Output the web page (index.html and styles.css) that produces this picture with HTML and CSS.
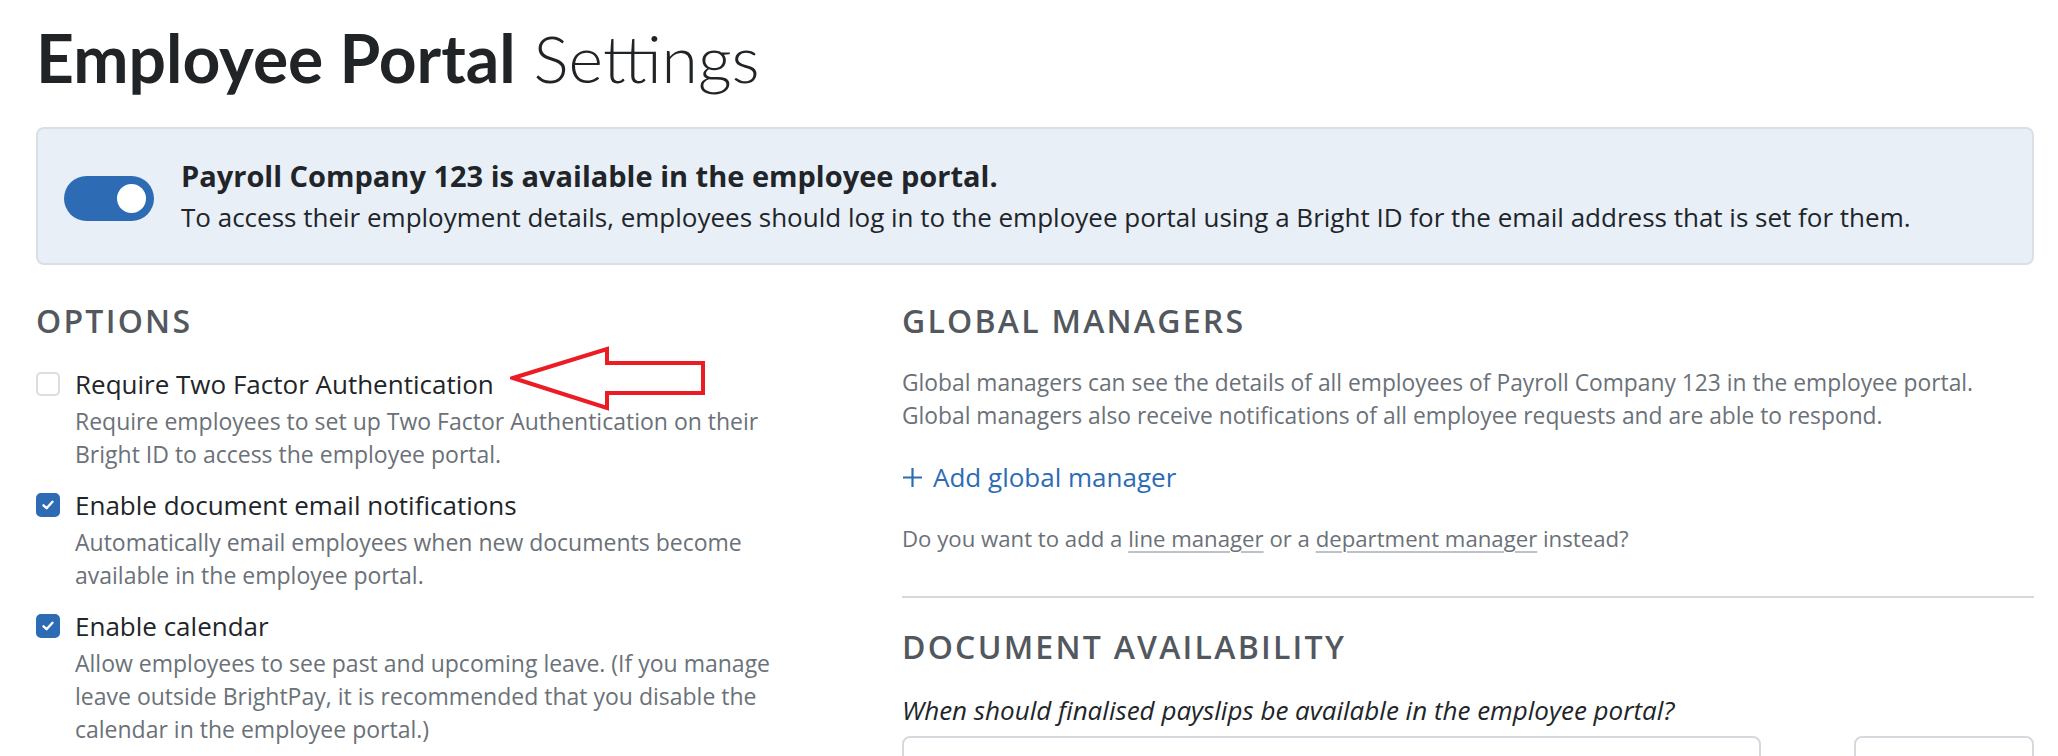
FILE: index.html
```html
<!DOCTYPE html>
<html lang="en">
<head>
    <meta charset="UTF-8">
    <meta name="viewport" content="width=device-width, initial-scale=1.0">
    <link rel="stylesheet" href="styles.css">
    <title>Employee Portal Settings</title>
</head>
<body>
    <div class="page">
        <h1 class="page-title"><strong>Employee Portal</strong> Settings</h1>

        <div class="portal-status">
            <span class="toggle"><span class="toggle-knob"></span></span>
            <div class="status-text">
                <p class="status-title">Payroll Company 123 is available in the employee portal.</p>
                <p class="status-desc">To access their employment details, employees should log in to the employee portal using a Bright ID for the email address that is set for them.</p>
            </div>
        </div>

        <div class="settings-grid">
            <section class="options">
                <h2 class="section-title">Options</h2>

                <div class="option">
                    <span class="checkbox"></span>
                    <div class="option-body">
                        <div class="option-label">Require Two Factor Authentication</div>
                        <div class="option-desc">Require employees to set up Two Factor Authentication on their Bright ID to access the employee portal.</div>
                    </div>
                    <svg class="annotation-arrow" width="198" height="66" viewBox="0 0 198 66">
                        <polygon points="3,32 97,3 97,17 193,17 193,47 97,47 97,62" fill="none" stroke="#ec1c24" stroke-width="4" stroke-linejoin="miter"/>
                    </svg>
                </div>

                <div class="option">
                    <span class="checkbox checked">
                        <svg width="14" height="14" viewBox="0 0 14 14"><path d="M2.5 7.3 L5.6 10.2 L11.5 3.8" fill="none" stroke="#fff" stroke-width="2.4" stroke-linecap="round" stroke-linejoin="round"/></svg>
                    </span>
                    <div class="option-body">
                        <div class="option-label">Enable document email notifications</div>
                        <div class="option-desc">Automatically email employees when new documents become available in the employee portal.</div>
                    </div>
                </div>

                <div class="option">
                    <span class="checkbox checked">
                        <svg width="14" height="14" viewBox="0 0 14 14"><path d="M2.5 7.3 L5.6 10.2 L11.5 3.8" fill="none" stroke="#fff" stroke-width="2.4" stroke-linecap="round" stroke-linejoin="round"/></svg>
                    </span>
                    <div class="option-body">
                        <div class="option-label">Enable calendar</div>
                        <div class="option-desc">Allow employees to see past and upcoming leave. (If you manage leave outside BrightPay, it is recommended that you disable the calendar in the employee portal.)</div>
                    </div>
                </div>
            </section>

            <section class="managers">
                <h2 class="section-title">Global Managers</h2>
                <p class="section-desc">Global managers can see the details of all employees of Payroll Company 123 in the employee portal.<br>Global managers also receive notifications of all employee requests and are able to respond.</p>
                <a class="add-link" href="#">
                    <svg width="21" height="21" viewBox="0 0 21 21"><path d="M10.5 1 V20 M1 10.5 H20" stroke="#2d6cb5" stroke-width="2.2"/></svg>
                    Add global manager
                </a>
                <p class="section-desc manager-hint">Do you want to add a <a class="soft-link" href="#">line manager</a> or a <a class="soft-link" href="#">department manager</a> instead?</p>

                <hr class="divider">

                <h2 class="section-title">Document Availability</h2>
                <p class="question">When should finalised payslips be available in the employee portal?</p>
                <div class="availability-row">
                    <div class="select-box wide">On the pay date</div>
                    <span class="row-word">from</span>
                    <div class="select-box narrow">09:00</div>
                </div>
            </section>
        </div>
    </div>
</body>
</html>
```

FILE: styles.css
```css
html, body {
    margin: 0;
    height: 100%;
    overflow: hidden;
    background-color: #fff;
}

body {
    font-family: "Open Sans", "Liberation Sans", sans-serif;
    color: #212529;
}

p {
    margin: 0;
}

.page {
    padding: 0 24px 0 36px;
}

.page-title {
    margin: 18px 0 30px 0;
    font-family: Lato, "Open Sans", sans-serif;
    font-size: 66px;
    line-height: 1.2;
    font-weight: 300;
    color: #212427;
}

.page-title strong {
    font-weight: 700;
}

/* status banner */
.portal-status {
    display: flex;
    align-items: center;
    gap: 27px;
    padding: 29px 26px 28px 26px;
    background-color: #e8eff7;
    border: 2px solid #d9dfe5;
    border-radius: 8px;
}

.toggle {
    flex: none;
    display: flex;
    align-items: center;
    justify-content: flex-end;
    box-sizing: border-box;
    width: 90px;
    height: 45px;
    padding: 0 8px;
    margin-top: 3px;
    background-color: #2d6cb5;
    border-radius: 23px;
}

.toggle-knob {
    width: 29px;
    height: 29px;
    border-radius: 50%;
    background-color: #fff;
}

.status-title {
    font-size: 29px;
    line-height: 36px;
    font-weight: 700;
    margin-bottom: 5px;
}

.status-desc {
    font-size: 26px;
    line-height: 36px;
}

/* columns */
.settings-grid {
    display: grid;
    grid-template-columns: 760px 1fr;
    column-gap: 106px;
    margin-top: 38px;
}

.section-title {
    margin: 0 0 27px 0;
    font-size: 32px;
    line-height: 36px;
    font-weight: 600;
    letter-spacing: 0.07em;
    text-transform: uppercase;
    color: #53585e;
}

.option {
    position: relative;
    display: flex;
    align-items: flex-start;
    gap: 15px;
    margin-bottom: 16px;
}

.checkbox {
    flex: none;
    display: flex;
    align-items: center;
    justify-content: center;
    box-sizing: border-box;
    width: 24px;
    height: 24px;
    margin-top: 6px;
    border: 2px solid #dadee3;
    border-radius: 5px;
    background-color: #fff;
}

.checkbox.checked {
    border-color: #2d6cb5;
    background-color: #2d6cb5;
}

.option-label {
    font-size: 26px;
    line-height: 36px;
}

.option-desc {
    margin-top: 3px;
    font-size: 23px;
    line-height: 33px;
    color: #6b7178;
}

.annotation-arrow {
    position: absolute;
    left: 474px;
    top: -20px;
}

.section-desc {
    font-size: 22.8px;
    line-height: 33px;
    color: #6b7178;
    margin-bottom: 27px;
}

.manager-hint {
    font-size: 22.2px;
}

.add-link {
    display: inline-flex;
    align-items: center;
    gap: 10px;
    margin-bottom: 27px;
    font-size: 26px;
    line-height: 36px;
    color: #2d6cb5;
    text-decoration: none;
}

.soft-link {
    color: inherit;
    text-decoration: underline;
    text-decoration-color: #bcc2c8;
    text-decoration-thickness: 2px;
    text-underline-offset: 4px;
}

.divider {
    margin: 41px 0 31px 0;
    border: 0;
    border-top: 2px solid #d5d9dd;
}

.question {
    margin-bottom: 8px;
    font-size: 26px;
    line-height: 36px;
    font-style: italic;
}

.availability-row {
    display: flex;
    align-items: flex-start;
    gap: 17px;
}

.select-box {
    box-sizing: border-box;
    height: 60px;
    padding: 12px 26px;
    border: 2px solid #d5d9dd;
    border-radius: 8px;
    font-size: 24px;
    line-height: 36px;
    color: #9aa0a6;
}

.select-box.wide {
    width: 859px;
}

.select-box.narrow {
    flex: 1;
}

.row-word {
    font-size: 26px;
    line-height: 36px;
    padding-top: 14px;
}
```
